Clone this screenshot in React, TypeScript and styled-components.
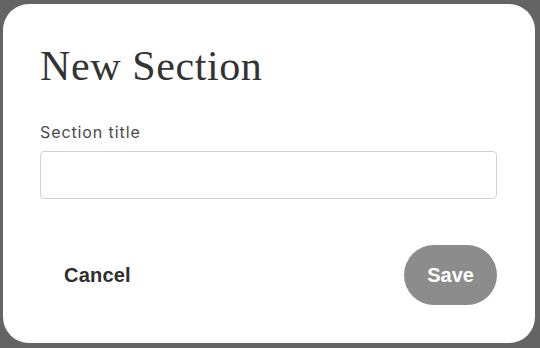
import React from "react";
import styled, { createGlobalStyle } from "styled-components";

const Global = createGlobalStyle`
  html, body { margin: 0; padding: 0; background: #646464; }
  body { width: 540px; height: 348px; overflow: hidden; }
`;

const Backdrop = styled.div`
  width: 540px;
  height: 348px;
  box-sizing: border-box;
  padding: 4px 5px 5px 3px;
  background: #646464;
`;

const Modal = styled.div`
  box-sizing: border-box;
  height: 339px;
  background: #ffffff;
  border-radius: 26px;
  padding: 41px 38px 0 37px;
  display: flex;
  flex-direction: column;
`;

const Title = styled.h1`
  margin: 0;
  font-family: "Liberation Serif", "Times New Roman", serif;
  font-weight: 400;
  font-size: 42px;
  line-height: 42px;
  color: #333333;
  letter-spacing: 0.6px;
`;

const Label = styled.label`
  display: block;
  margin-top: 35px;
  font-family: Inter, "Liberation Sans", Arial, sans-serif;
  font-size: 16px;
  line-height: 20px;
  color: #4a4a4a;
  letter-spacing: 0.9px;
`;

const Input = styled.input`
  display: block;
  box-sizing: border-box;
  width: 100%;
  height: 48px;
  margin-top: 9px;
  border: 1px solid #d2d2d2;
  border-radius: 4px;
  background: #fff;
  font-family: Inter, "Liberation Sans", Arial, sans-serif;
  font-size: 16px;
  padding: 0 12px;
  outline: none;
`;

const Actions = styled.div`
  display: flex;
  justify-content: space-between;
  align-items: center;
  margin-top: 46px;
`;

const Button = styled.button<{ $primary?: boolean }>`
  height: 60px;
  padding: 0 ${(p) => (p.$primary ? "23px" : "24px")};
  border: none;
  border-radius: 30px;
  font-family: "Liberation Sans", Arial, sans-serif;
  font-weight: 700;
  font-size: 20px;
  letter-spacing: ${(p) => (p.$primary ? "0" : "0.2px")};
  background: ${(p) => (p.$primary ? "#8c8c8c" : "transparent")};
  color: ${(p) => (p.$primary ? "#ffffff" : "#2e2e2e")};
  cursor: pointer;
`;

export default function App() {
  return (
    <>
      <Global />
      <Backdrop>
        <Modal>
          <Title>New Section</Title>
          <Label htmlFor="section-title">Section title</Label>
          <Input id="section-title" type="text" />
          <Actions>
            <Button>Cancel</Button>
            <Button $primary>Save</Button>
          </Actions>
        </Modal>
      </Backdrop>
    </>
  );
}
